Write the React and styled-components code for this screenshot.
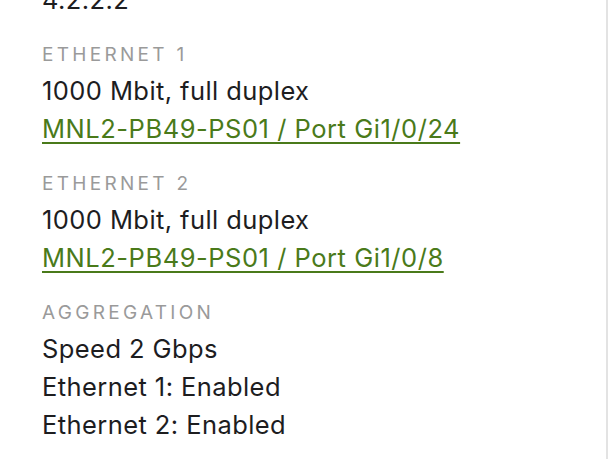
import React from "react";
import styled, { createGlobalStyle } from "styled-components";

const Global = createGlobalStyle`
  html, body { margin: 0; padding: 0; background: #ffffff; overflow: hidden; }
  body { font-family: Inter, "Noto Sans", sans-serif; }
`;

const Panel = styled.div`
  width: 606px;
  height: 459px;
  border-right: 2px solid #e3e3e3;
  box-sizing: content-box;
  overflow: hidden;
  background: #ffffff;
`;

const Content = styled.div`
  display: flex;
  flex-direction: column;
  gap: 17px;
  padding-left: 42px;
  margin-top: -19px;
`;

const Section = styled.section`
  display: flex;
  flex-direction: column;
`;

const Label = styled.div`
  height: 36px;
  line-height: 38px;
  font-size: 19px;
  letter-spacing: 3.3px;
  text-transform: uppercase;
  color: #9a9a9a;
`;

const Line = styled.div`
  height: 38px;
  line-height: 38px;
  font-size: 25.5px;
  letter-spacing: 0.42px;
  color: #1d1d1f;
`;

const Link = styled.a`
  height: 38px;
  line-height: 38px;
  font-size: 25.5px;
  letter-spacing: 0.53px;
  color: #4a7a1a;
  text-decoration: underline;
  text-underline-offset: 4px;
  text-decoration-thickness: 2px;
  align-self: flex-start;
`;

const sections = [
  { label: "Ethernet 1", lines: ["1000 Mbit, full duplex"], link: "MNL2-PB49-PS01 / Port Gi1/0/24" },
  { label: "Ethernet 2", lines: ["1000 Mbit, full duplex"], link: "MNL2-PB49-PS01 / Port Gi1/0/8" },
  { label: "Aggregation", lines: ["Speed 2 Gbps", "Ethernet 1: Enabled", "Ethernet 2: Enabled"] },
];

export default function App() {
  return (
    <>
      <Global />
      <Panel>
        <Content>
          <Section>
            <Line>4.2.2.2</Line>
          </Section>
          {sections.map((s) => (
            <Section key={s.label}>
              <Label>{s.label}</Label>
              {s.lines.map((l) => (
                <Line key={l}>{l}</Line>
              ))}
              {s.link && <Link href="#">{s.link}</Link>}
            </Section>
          ))}
        </Content>
      </Panel>
    </>
  );
}
